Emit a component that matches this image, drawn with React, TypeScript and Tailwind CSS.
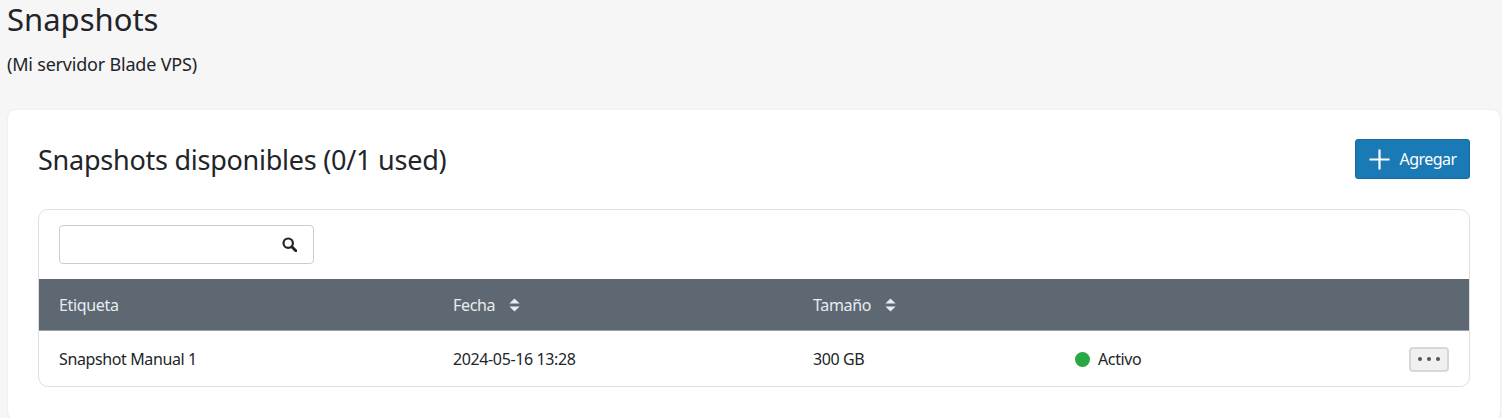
import type { ReactNode } from 'react';

const columns = 'grid grid-cols-[394px_360px_262px_1fr] items-center px-5';

function SortIcon(): ReactNode {
  return (
    <svg width="11" height="14" viewBox="0 0 11 14" className="ml-[14px]" fill="#e9ecef">
      <path d="M5.5 0.5 10.6 5.5H0.4Z" />
      <path d="M5.5 13.5 0.4 8.5H10.6Z" />
    </svg>
  );
}

export default function App(): ReactNode {
  return (
    <div className="h-[418px] overflow-hidden bg-[#f6f6f6] font-['Noto_Sans',sans-serif] text-[#212529]">
      {/* Page title */}
      <div className="h-[110px] pl-[7px]">
        <h1 className="text-[31px] leading-[38px]">Snapshots</h1>
        <p className="mt-[14px] text-[18px] leading-[24px] tracking-[-0.2px]">(Mi servidor Blade VPS)</p>
      </div>

      {/* Card */}
      <div className="mr-[2px] ml-2 h-[310px] rounded-lg bg-white px-[30px] pt-[29px] shadow-[0_0_2px_rgba(0,0,0,0.1)]">
        <div className="flex h-[40px] items-center justify-between">
          <h2 className="pt-[2px] text-[27px] leading-[40px] tracking-[-0.25px]">Snapshots disponibles (0/1 used)</h2>
          <button className="flex h-[40px] w-[115px] items-center justify-center gap-[10px] rounded-[3px] border border-[#166a9c] bg-[#1a7ab5] text-[16px] tracking-[-0.55px] text-white">
            <svg width="21" height="21" viewBox="0 0 21 21" stroke="#ffffff" strokeWidth="2.2">
              <path d="M10.5 0.5V20.5M0.5 10.5H20.5" />
            </svg>
            Agregar
          </button>
        </div>

        {/* Table box */}
        <div className="mt-[30px] h-[178px] overflow-hidden rounded-[10px] border border-[#dfdfdf]">
          <div className="flex h-[69px] items-center px-5">
            <div className="flex h-[39px] w-[255px] items-center justify-end rounded-[4px] border border-[#cccccc] bg-white pr-[16px]">
              <svg width="15" height="15" viewBox="0 0 15 15" fill="none" stroke="#212529">
                <circle cx="6.2" cy="6.2" r="4.7" strokeWidth="2.2" />
                <path d="M9.8 9.8 13.8 13.8" strokeWidth="3" strokeLinecap="round" />
              </svg>
            </div>
          </div>

          <div className={`${columns} h-[52px] border-b border-[#9aa3ab] bg-[#5d6873] pt-px text-[16px] tracking-[-0.35px] text-[#e9ecef]`}>
            <span>Etiqueta</span>
            <span className="flex items-center">Fecha<SortIcon /></span>
            <span className="flex items-center">Tamaño<SortIcon /></span>
            <span />
          </div>

          <div className={`${columns} h-[56px] text-[16px] tracking-[-0.38px]`}>
            <span>Snapshot Manual 1</span>
            <span>2024-05-16 13:28</span>
            <span>300 GB</span>
            <div className="flex items-center justify-between">
              <span className="flex items-center gap-2">
                <span className="h-[15px] w-[15px] rounded-full bg-[#28a745]" />
                Activo
              </span>
              <button className="flex h-[25px] w-[40px] items-center justify-center gap-[5px] rounded-[4px] border-2 border-[#d8d8d8] bg-[#f0f0f0]">
                <span className="h-1 w-1 rounded-full bg-[#555555]" />
                <span className="h-1 w-1 rounded-full bg-[#555555]" />
                <span className="h-1 w-1 rounded-full bg-[#555555]" />
              </button>
            </div>
          </div>
        </div>
      </div>
    </div>
  );
}
